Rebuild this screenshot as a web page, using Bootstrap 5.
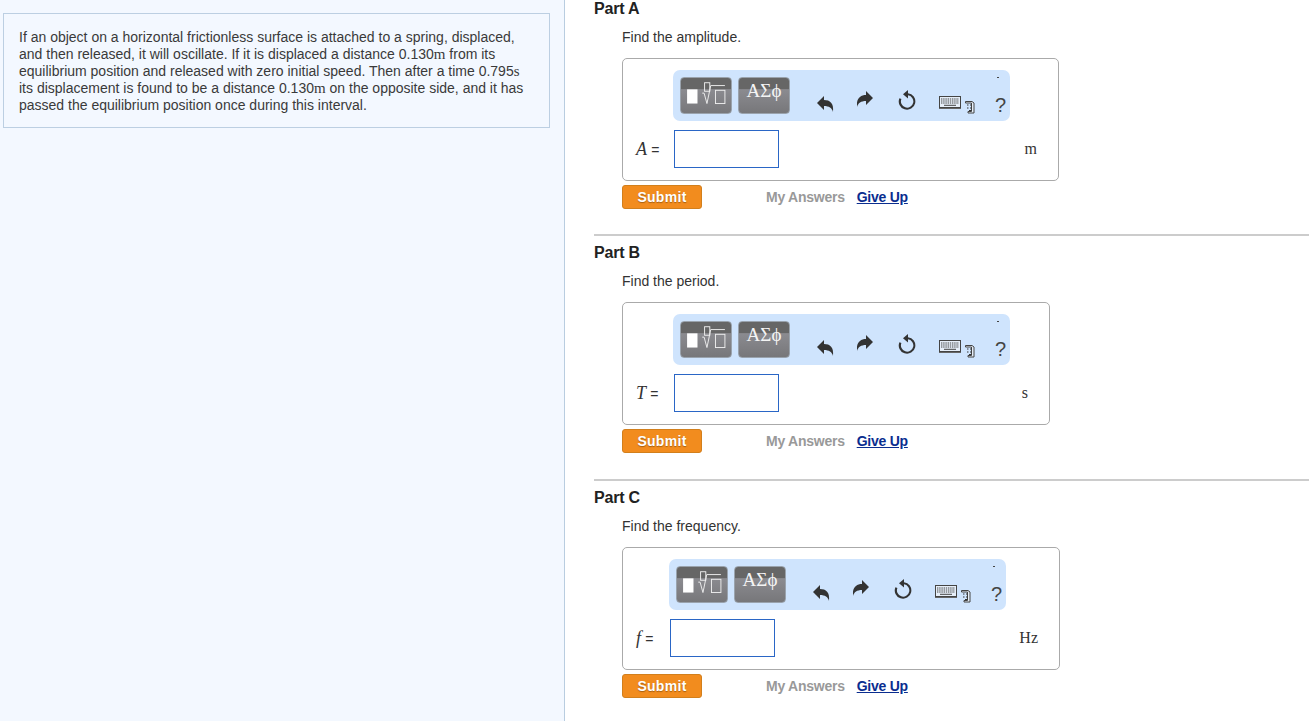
<!DOCTYPE html>
<html lang="en">
<head>
<meta charset="utf-8">
<title>Part A</title>
<link href="https://cdn.jsdelivr.net/npm/bootstrap@5.3.0/dist/css/bootstrap.min.css" rel="stylesheet">
<style>
html,body{height:721px;overflow:hidden;background:#fff;font-family:"Liberation Sans",Arial,sans-serif;color:#333;}
.shell{height:721px;}
.leftpane{width:565px;flex:none;background:#f3f8ff;border-right:1px solid #b9cde0;padding:13px 14px 0 3px;}
.intro{border:1px solid #bccfe2;padding:15px;height:115px;font-size:14px;line-height:17px;color:#3a3a3a;}
.intro b{font-family:"Liberation Serif",serif;font-weight:400;font-size:15px;}
.rightpane{flex:1;padding-left:29px;min-width:0;}
.partblock{height:245px;border-bottom:2px solid #ccc;}
.partblock:last-child{border-bottom:0;}
.parthead{font-size:16px;font-weight:700;color:#222;line-height:18px;margin:0;padding-top:0;letter-spacing:-.2px;}
.partbody{padding-left:28px;}
.prompt{font-size:14px;line-height:17px;margin:11px 0 12px;color:#333;}
.ansbox{height:123px;border:1px solid #aaa;border-radius:5px;padding:11px 12px 0 11px;background:#fff;}
.w-a{width:437px}.w-b{width:428px}.w-c{width:438px}
.mq{height:51px;width:337px;background:#cfe4fd;border-radius:7px;margin-left:39px;position:relative;}
.shift .mq{margin-left:35px}
.shift .inp{margin-left:0}
.tplbtn{width:52px;height:37px;border-radius:4px;margin-top:7px;background:linear-gradient(#666 0,#666 32%,#8b8b90 33%,#77777a 100%);border:1px solid #9aa3ad;color:#fff;padding:0;display:block;}
.tplbtn.first{margin-left:7px;margin-right:6px;}
.sym{font-family:"Liberation Serif",serif;font-size:19px;line-height:26px;text-align:center;color:#f4f4f4;}
.glyph{position:absolute;display:block;fill:#333;}
.ques{position:absolute;left:322px;top:24px;font-size:20px;line-height:22px;color:#444;}
.dot{position:absolute;left:324px;top:7px;width:2px;height:1px;background:#444;}
.ansrow{margin-top:9px;height:38px;}
.vname{width:40px;flex:none;font-family:"Liberation Serif",serif;font-size:17px;color:#333;padding-left:2px;white-space:nowrap;}
.vname i{font-size:18px}
.vname span{font-family:"Liberation Sans",sans-serif;font-size:14px;}
.shift .vname{width:36px}
.inp{width:105px;height:38px;border:1px solid #2a66c6;background:#fff;flex:none;border-radius:0;padding:0;}
.unit{margin-left:auto;font-family:"Liberation Serif",serif;font-size:16px;color:#333;padding-right:9px;}
.actions{margin-top:4px;height:24px;}
.submitbtn{width:80px;height:24px;padding:0;border:1px solid #d27f1c;border-radius:3px;background:#f28c1e;color:#fff;font-size:14px;font-weight:700;line-height:22px;letter-spacing:.3px;text-shadow:0 1px 1px #a65f10;}
.myans{margin-left:64px;font-size:14px;font-weight:700;color:#999;letter-spacing:-.25px;}
.giveup{margin-left:12px;font-size:14px;font-weight:700;color:#0a2d8f;letter-spacing:-.25px;}
</style>
</head>
<body>
<svg width="0" height="0" class="position-absolute">
<defs>
<symbol id="ic-tpl" viewBox="0 0 52 37">
<rect x="6" y="12" width="11" height="15" fill="#fff"/>
<rect x="24.5" y="5" width="5.5" height="9" fill="none" stroke="#eee" stroke-width="1"/>
<path d="M22 16l2 0 3 11 4-19h15" fill="none" stroke="#eee" stroke-width="1"/>
<rect x="36" y="13" width="10" height="14" fill="none" stroke="#eee" stroke-width="1"/>
</symbol>
<symbol id="ic-undo" viewBox="0 0 17 18"><path d="M0 8L7 1v4c6 0 10 3 9 12-1-4-4-6-9-6v4z"/></symbol>
<symbol id="ic-redo" viewBox="0 0 16 17"><path d="M16 7L9 0v4C3 4-1 8 0 16c1-4 4-6 9-6v4z"/></symbol>
<symbol id="ic-reload" viewBox="0 0 20 21"><path d="M11 0v3.2a8.3 8.3 0 1 1-8.6 5l2 .9a6.2 6.2 0 1 0 6.6-3.8V8.500L6 4.300z"/></symbol>
<symbol id="ic-kbd" viewBox="0 0 22 13"><rect x=".5" y=".5" width="21" height="11" fill="#e6eef8" stroke="#444"/><path d="M2 3h18M2 5h18M2 7h18" stroke="#444" stroke-dasharray="1.400 .8" fill="none"/><path d="M5 9.300h12" stroke="#444" fill="none"/><path d="M0 12.500h22" stroke="#666" fill="none"/></symbol>
<symbol id="ic-hand" viewBox="0 0 10 14"><path d="M.5 1.500h6.500l2 1.500v10H3v-1.500H6.500V3h-6z" fill="#e6eef8" stroke="#444"/><path d="M2 5h1.500M5 5h1.500M2 8h1.500M5 8h1.500M4 10.500h2.500" stroke="#333" fill="none"/></symbol>
</defs>
</svg>
<div class="shell d-flex">
  <aside class="leftpane">
    <div class="intro">If an object on a horizontal frictionless surface is attached to a spring, displaced, and then released, it will oscillate. If it is displaced a distance 0.130<b>m</b> from its equilibrium position and released with zero initial speed. Then after a time 0.795<b>s</b> its displacement is found to be a distance 0.130<b>m</b> on the opposite side, and it has passed the equilibrium position once during this interval.</div>
  </aside>
  <main class="rightpane">

    <section class="partblock" style="height:236px">
      <h2 class="parthead">Part A</h2>
      <div class="partbody">
        <p class="prompt">Find the amplitude.</p>
        <div class="ansbox w-a">
          <div class="mq d-flex">
            <div class="tplbtn first"><svg width="50" height="35"><use href="#ic-tpl"/></svg></div>
            <div class="tplbtn sym">ΑΣϕ</div>
            <svg class="glyph" style="left:144px;top:25px" width="17" height="18"><use href="#ic-undo"/></svg>
            <svg class="glyph" style="left:184px;top:21px" width="16" height="17"><use href="#ic-redo"/></svg>
            <svg class="glyph" style="left:224px;top:20px" width="20" height="21"><use href="#ic-reload"/></svg>
            <svg class="glyph" style="left:266px;top:26px" width="22" height="13"><use href="#ic-kbd"/></svg>
            <svg class="glyph" style="left:292px;top:30px" width="10" height="14"><use href="#ic-hand"/></svg>
            <span class="ques">?</span><span class="dot"></span>
          </div>
          <div class="ansrow d-flex align-items-center">
            <div class="vname"><i>A</i> <span>=</span></div>
            <div class="inp"></div>
            <div class="unit">m</div>
          </div>
        </div>
        <div class="actions d-flex align-items-center">
          <button type="button" class="submitbtn">Submit</button>
          <span class="myans">My Answers</span>
          <a href="#" class="giveup">Give Up</a>
        </div>
      </div>
    </section>

    <section class="partblock" style="height:245px;padding-top:8px">
      <h2 class="parthead">Part B</h2>
      <div class="partbody">
        <p class="prompt">Find the period.</p>
        <div class="ansbox w-b">
          <div class="mq d-flex">
            <div class="tplbtn first"><svg width="50" height="35"><use href="#ic-tpl"/></svg></div>
            <div class="tplbtn sym">ΑΣϕ</div>
            <svg class="glyph" style="left:144px;top:25px" width="17" height="18"><use href="#ic-undo"/></svg>
            <svg class="glyph" style="left:184px;top:21px" width="16" height="17"><use href="#ic-redo"/></svg>
            <svg class="glyph" style="left:224px;top:20px" width="20" height="21"><use href="#ic-reload"/></svg>
            <svg class="glyph" style="left:266px;top:26px" width="22" height="13"><use href="#ic-kbd"/></svg>
            <svg class="glyph" style="left:292px;top:30px" width="10" height="14"><use href="#ic-hand"/></svg>
            <span class="ques">?</span><span class="dot"></span>
          </div>
          <div class="ansrow d-flex align-items-center">
            <div class="vname"><i>T</i> <span>=</span></div>
            <div class="inp"></div>
            <div class="unit">s</div>
          </div>
        </div>
        <div class="actions d-flex align-items-center">
          <button type="button" class="submitbtn">Submit</button>
          <span class="myans">My Answers</span>
          <a href="#" class="giveup">Give Up</a>
        </div>
      </div>
    </section>

    <section class="partblock" style="padding-top:8px">
      <h2 class="parthead">Part C</h2>
      <div class="partbody">
        <p class="prompt">Find the frequency.</p>
        <div class="ansbox w-c shift">
          <div class="mq d-flex">
            <div class="tplbtn first"><svg width="50" height="35"><use href="#ic-tpl"/></svg></div>
            <div class="tplbtn sym">ΑΣϕ</div>
            <svg class="glyph" style="left:144px;top:25px" width="17" height="18"><use href="#ic-undo"/></svg>
            <svg class="glyph" style="left:184px;top:21px" width="16" height="17"><use href="#ic-redo"/></svg>
            <svg class="glyph" style="left:224px;top:20px" width="20" height="21"><use href="#ic-reload"/></svg>
            <svg class="glyph" style="left:266px;top:26px" width="22" height="13"><use href="#ic-kbd"/></svg>
            <svg class="glyph" style="left:292px;top:30px" width="10" height="14"><use href="#ic-hand"/></svg>
            <span class="ques">?</span><span class="dot"></span>
          </div>
          <div class="ansrow d-flex align-items-center">
            <div class="vname"><i>f</i> <span>=</span></div>
            <div class="inp"></div>
            <div class="unit">Hz</div>
          </div>
        </div>
        <div class="actions d-flex align-items-center">
          <button type="button" class="submitbtn">Submit</button>
          <span class="myans">My Answers</span>
          <a href="#" class="giveup">Give Up</a>
        </div>
      </div>
    </section>

  </main>
</div>
</body>
</html>
